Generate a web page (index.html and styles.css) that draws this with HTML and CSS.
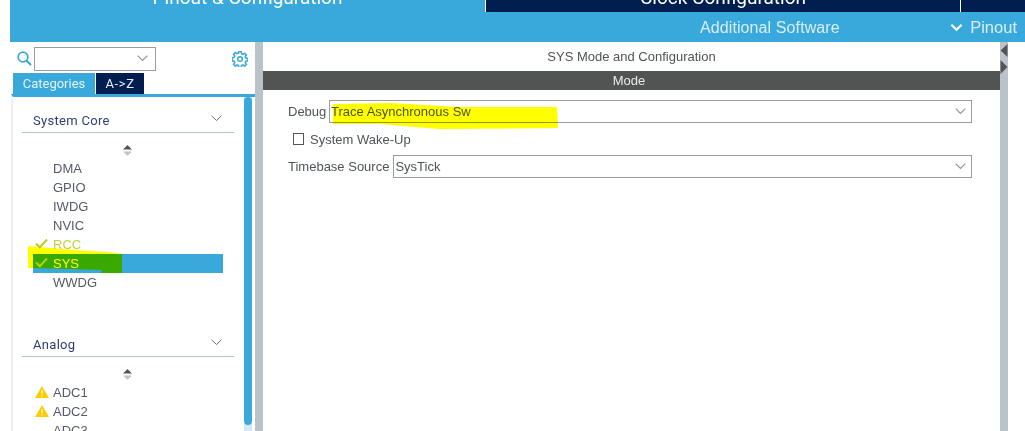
FILE: index.html
```html
<!DOCTYPE html>
<html lang="en">
<head>
<meta charset="utf-8">
<title>SYS Mode and Configuration</title>
<link rel="stylesheet" href="styles.css">
</head>
<body>
<div class="page">
  <header class="header">
    <div class="tabs">
      <div class="tab tab-active"><span>Pinout &amp; Configuration</span></div>
      <div class="tab tab-dark"><span>Clock Configuration</span></div>
      <div class="tab tab-end"></div>
    </div>
    <div class="subbar">
      <div class="additional">Additional Software</div>
      <div class="pinout">
        <svg class="pinout-chev" viewBox="0 0 14 9"><path d="M1.500 1.500 7 7l5.500-5.500" fill="none" stroke="#fff" stroke-width="2.200"/></svg>
        <span>Pinout</span>
      </div>
    </div>
  </header>
  <main class="main">
    <aside class="sidebar">
      <div class="search">
        <svg class="search-icon" viewBox="0 0 15 15"><circle cx="6" cy="6" r="4.800" fill="none" stroke="#39a9dc" stroke-width="1.800"/><path d="m9.500 9.500 4.500 4.500" stroke="#39a9dc" stroke-width="2.200"/></svg>
        <div class="search-box">
          <svg class="chev" viewBox="0 0 11 7"><path d="M.7.700 5.500 5.500 10.300.700" fill="none" stroke="#8b9298" stroke-width="1.100"/></svg>
        </div>
        <svg class="gear" viewBox="0 0 16 16"><g fill="none" stroke="#39a9dc"><circle cx="8" cy="8" r="2.300" stroke-width="1.500"/><path stroke-width="1.600" d="M6.800.8h2.400l.4 2 1.400.6 1.700-1.100 1.700 1.700-1.100 1.700.6 1.400 2 .4v2.400l-2 .4-.6 1.400 1.100 1.700-1.700 1.700-1.700-1.100-1.400.6-.4 2H6.800l-.4-2-1.400-.6-1.700 1.100-1.700-1.700 1.100-1.700-.6-1.400-2-.4V6.800l2-.4.6-1.400-1.100-1.700 1.700-1.700 1.700 1.100 1.400-.6z"/></g></svg>
      </div>
      <div class="view-tabs">
        <div class="view-tab view-cat">Categories</div>
        <div class="view-tab view-az">A-&gt;Z</div>
      </div>
      <div class="tree">
        <div class="tree-body">
          <section class="group">
            <div class="group-head"><span>System Core</span>
              <svg class="group-chev" viewBox="0 0 11 7"><path d="M.5.700 5.500 5.500 10.500.700" fill="none" stroke="#6d7276" stroke-width="1"/></svg>
            </div>
            <svg class="sorter" viewBox="0 0 9 11"><path d="M4.500 0 9 4.500H0z" fill="#555"/><path d="M0 6.500h9L4.500 11z" fill="#c4c6c8"/></svg>
            <ul class="items">
              <li class="item">DMA</li>
              <li class="item">GPIO</li>
              <li class="item">IWDG</li>
              <li class="item">NVIC</li>
              <li class="item item-rcc"><svg class="check" viewBox="0 0 13 11"><path d="M1 5.500 4.800 9.300 12 1.500" fill="none" stroke="#bccb2b" stroke-width="2"/></svg>RCC</li>
              <li class="item item-sel"><svg class="check" viewBox="0 0 13 11"><path d="M1 5.500 4.800 9.300 12 1.500" fill="none" stroke="#b5d3e0" stroke-width="2"/></svg>SYS</li>
              <li class="item">WWDG</li>
            </ul>
          </section>
          <section class="group group-analog">
            <div class="group-head"><span>Analog</span>
              <svg class="group-chev" viewBox="0 0 11 7"><path d="M.5.700 5.500 5.500 10.500.700" fill="none" stroke="#6d7276" stroke-width="1"/></svg>
            </div>
            <svg class="sorter" viewBox="0 0 9 11"><path d="M4.500 0 9 4.500H0z" fill="#555"/><path d="M0 6.500h9L4.500 11z" fill="#c4c6c8"/></svg>
            <ul class="items">
              <li class="item"><svg class="warn" viewBox="0 0 14 12"><path d="M7 0 14 12H0z" fill="#ffcc00"/><path d="M6.400 4h1.200v4.300H6.400zM6.400 9.200h1.200v1.300H6.400z" fill="#fff"/></svg>ADC1</li>
              <li class="item"><svg class="warn" viewBox="0 0 14 12"><path d="M7 0 14 12H0z" fill="#ffcc00"/><path d="M6.400 4h1.200v4.300H6.400zM6.400 9.200h1.200v1.300H6.400z" fill="#fff"/></svg>ADC2</li>
              <li class="item">ADC3</li>
            </ul>
          </section>
        </div>
        <div class="scroll"><div class="scroll-thumb"></div></div>
      </div>
    </aside>
    <div class="splitter"></div>
    <section class="content">
      <h1 class="content-title">SYS Mode and Configuration</h1>
      <div class="mode-bar">Mode</div>
      <div class="form">
        <div class="row">
          <label class="label label-debug">Debug</label>
          <div class="select"><span>Trace Asynchronous Sw</span><svg class="chev" viewBox="0 0 11 7"><path d="M.7.700 5.500 5.500 10.300.700" fill="none" stroke="#8b9298" stroke-width="1.100"/></svg></div>
        </div>
        <div class="row-check"><span class="checkbox"></span><span>System Wake-Up</span></div>
        <div class="row">
          <label class="label">Timebase Source</label>
          <div class="select"><span>SysTick</span><svg class="chev" viewBox="0 0 11 7"><path d="M.7.700 5.500 5.500 10.300.700" fill="none" stroke="#8b9298" stroke-width="1.100"/></svg></div>
        </div>
      </div>
    </section>
    <div class="collapse">
      <svg class="collapse-arrows" viewBox="0 0 8 32"><path d="M7.500 1v13L.5 7.500z" fill="#555"/><path d="M.5 17v14l7-7z" fill="#555"/></svg>
    </div>
  </main>
  <svg class="marker" viewBox="0 0 1025 431" aria-hidden="true">
    <path class="ink" d="M28 246 74 250 108 252 122 254V273H100L102 270 33 268 28 268Z"/>
    <path class="ink" d="M333 104 390 103 460 107 557 107 558 128 440 129 380 124 333 124Z"/>
  </svg>
</div>
</body>
</html>
```
FILE: styles.css
```css
* { box-sizing: border-box; }
html, body { margin: 0; padding: 0; background: #fff; }
body { width: 1025px; height: 431px; overflow: hidden; font-family: "Liberation Sans", Arial, sans-serif; color: #4f5458; }
.page { position: relative; width: 1025px; height: 431px; overflow: hidden; }

.header { margin-left: 10px; height: 42px; background: #39a9dc; display: flex; flex-direction: column; }
.tabs { display: flex; height: 12px; overflow: hidden; background: #fff; }
.tab { height: 12px; color: #fff; font-family: Roboto, "Liberation Sans", sans-serif; font-size: 19px; display: flex; justify-content: center; align-items: flex-end; line-height: 20px; }
.tab span { white-space: nowrap; flex: none; transform: translateY(-4px); }
.tab-active { width: 475px; background: #39a9dc; }
.tab-dark { width: 474px; margin-left: 1px; background: #001f50; }
.tab-end { flex: 1; margin-left: 1px; background: #001f50; }
.subbar { flex: 1; display: flex; align-items: center; padding-top: 1px; color: #d9eefa; font-size: 16px; }
.additional { margin-left: 690px; width: 142px; white-space: nowrap; letter-spacing: .1px; }
.pinout { margin-left: auto; margin-right: 8px; display: flex; align-items: center; gap: 7px; font-size: 16.500px; }
.pinout-chev { width: 13px; height: 9px; }

.main { display: flex; height: 389px; padding-left: 10px; }
.sidebar { width: 245px; flex: none; display: flex; flex-direction: column; }
.search { display: flex; align-items: center; height: 31px; padding: 2px 0 0 7px; }
.search-icon { width: 15px; height: 15px; }
.search-box { width: 122px; height: 24px; margin-left: 2px; border: 1px solid #969ca1; display: flex; justify-content: flex-end; align-items: center; padding-right: 7px; }
.chev { width: 11px; height: 7px; flex: none; }
.gear { width: 16px; height: 16px; margin-left: 76px; }
.view-tabs { display: flex; padding-left: 3px; height: 21px; gap: 1px; }
.view-tab { color: #e3f2fb; font-family: Roboto, "Liberation Sans", sans-serif; font-size: 13px; display: flex; align-items: center; justify-content: center; }
.view-cat { width: 82px; background: #39a9dc; }
.view-az { width: 48px; background: #001f50; letter-spacing: .6px; }
.tree { flex: 1; margin-left: 1px; border-top: 3px solid #39a9dc; border-left: 2px solid #eef0f1; display: flex; min-height: 0; overflow: hidden; }
.tree-body { width: 231px; flex: none; }
.group-head { margin: 10px 0 0 9px; width: 212px; height: 26px; border-bottom: 1px solid #b4c2ca; display: flex; justify-content: space-between; align-items: center; padding: 2px 12px 0 11px; font-family: Roboto, "Liberation Sans", sans-serif; font-size: 13px; letter-spacing: .3px; color: #2f3d72; }
.group-chev { width: 11px; height: 7px; margin-top: -5px; }
.sorter { display: block; width: 9px; height: 11px; margin: 12px 0 0 110px; }
.items { list-style: none; margin: 3px 0 0; padding: 0; }
.item { height: 19px; margin-left: 20px; width: 190px; padding-left: 20px; position: relative; font-size: 13px; line-height: 19px; color: #565a68; }
.item-rcc { color: #c6d03a; }
.item-sel { background: #39a9dc; color: #fff; }
.check { position: absolute; left: 2px; top: 3px; width: 13px; height: 11px; }
.warn { position: absolute; left: 2px; top: 3px; width: 14px; height: 12px; }
.group-analog { margin-top: 39px; }
.scroll { width: 8px; background: #d5e8f5; }
.scroll-thumb { height: 328px; background: #39a9dc; border-radius: 4px; }

.splitter { width: 8px; flex: none; background: #b8c4ca; }
.content { width: 737px; flex: none; }
.content-title { margin: 0; height: 29px; font-weight: 400; font-size: 13px; text-align: center; line-height: 29px; color: #4f5458; }
.mode-bar { height: 19px; background: #525454; color: #e8e8e8; font-size: 13px; line-height: 19px; text-align: center; padding-right: 5px; }
.form { padding: 10px 28px 0 25px; font-size: 13px; }
.row { display: flex; align-items: center; gap: 4px; height: 23px; }
.label { white-space: nowrap; }
.label-debug { width: 37px; }
.select { flex: 1; height: 23px; border: 1px solid #969ca1; display: flex; justify-content: space-between; align-items: center; padding: 0 5px 0 1px; }
.row-check { display: flex; align-items: center; gap: 6px; height: 32px; padding-left: 5px; }
.checkbox { width: 11px; height: 12px; border: 1px solid #555; background: #fff; }

.collapse { width: 8px; flex: none; background: #b8c4ca; padding-top: 1px; }
.collapse-arrows { display: block; width: 8px; height: 32px; }

.marker { position: absolute; left: 0; top: 0; width: 1025px; height: 431px; mix-blend-mode: multiply; pointer-events: none; }
.ink { fill: #ffff00; }
```
